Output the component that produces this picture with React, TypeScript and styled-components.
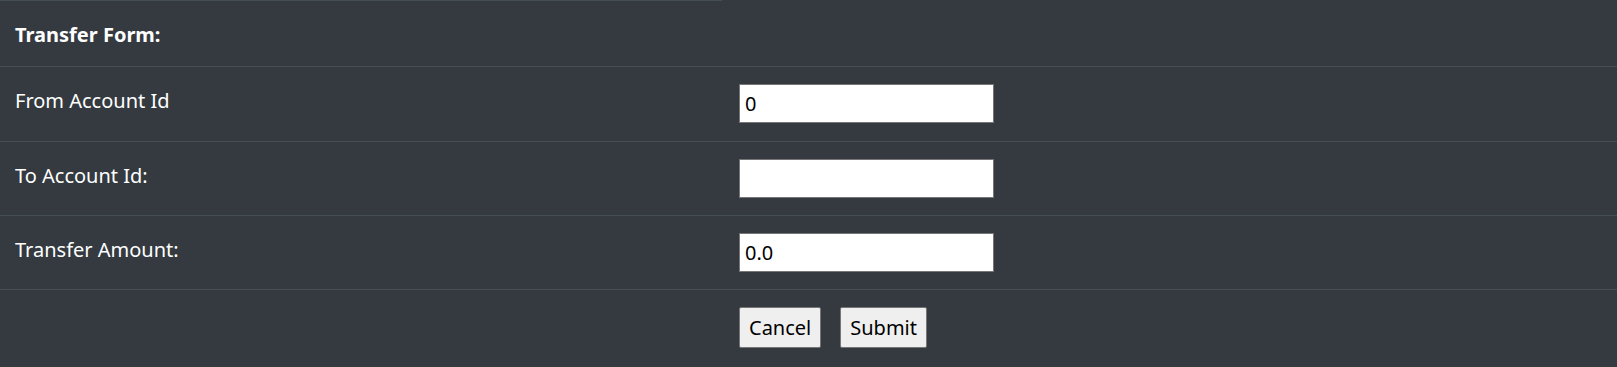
import React from "react";
import styled, { createGlobalStyle } from "styled-components";

const Global = createGlobalStyle`
  html, body { margin: 0; padding: 0; background: #343a40; }
  body { font-family: "Noto Sans", "Open Sans", sans-serif; color: #fff; }
`;

const Table = styled.div`
  width: 1617px;
  display: flex;
  flex-direction: column;
  background: #343a40;
`;

const Row = styled.div<{ $h: number; $border?: boolean }>`
  display: grid;
  grid-template-columns: 722px 1fr;
  height: ${(p) => p.$h}px;
  box-sizing: border-box;
  border-top: ${(p) => (p.$border ? "1px solid #454d55" : "none")};
`;

const HeadCell = styled.div`
  border-top: 1px solid #454d55;
  padding: 19px 15px 15px;
  font-weight: 700;
  font-size: 20px;
  line-height: 30px;
`;

const LabelCell = styled.div`
  padding: 19px 15px 15px;
  font-size: 20px;
  line-height: 30px;
`;

const FieldCell = styled.div`
  padding: 17px 17px;
  display: flex;
  align-items: flex-start;
  gap: 19px;
`;

const Input = styled.input`
  box-sizing: border-box;
  width: 255px;
  height: 39px;
  border: 1px solid #767676;
  background: #fff;
  padding: 0 5px;
  font-family: inherit;
  font-size: 20px;
  color: #000;
  outline: none;
`;

const Button = styled.button`
  box-sizing: border-box;
  height: 41px;
  padding: 0 9px;
  border: 1px solid #767676;
  border-radius: 2px;
  background: #efefef;
  font-family: inherit;
  font-size: 20px;
  color: #000;
`;

export default function App() {
  return (
    <>
      <Global />
      <Table>
        <Row $h={66}>
          <HeadCell>Transfer Form:</HeadCell>
          <div />
        </Row>
        <Row $h={75} $border>
          <LabelCell>From Account Id</LabelCell>
          <FieldCell>
            <Input defaultValue="0" />
          </FieldCell>
        </Row>
        <Row $h={74} $border>
          <LabelCell>To Account Id:</LabelCell>
          <FieldCell>
            <Input defaultValue="" />
          </FieldCell>
        </Row>
        <Row $h={74} $border>
          <LabelCell>Transfer Amount:</LabelCell>
          <FieldCell>
            <Input defaultValue="0.0" />
          </FieldCell>
        </Row>
        <Row $h={78} $border>
          <div />
          <FieldCell>
            <Button>Cancel</Button>
            <Button>Submit</Button>
          </FieldCell>
        </Row>
      </Table>
    </>
  );
}
